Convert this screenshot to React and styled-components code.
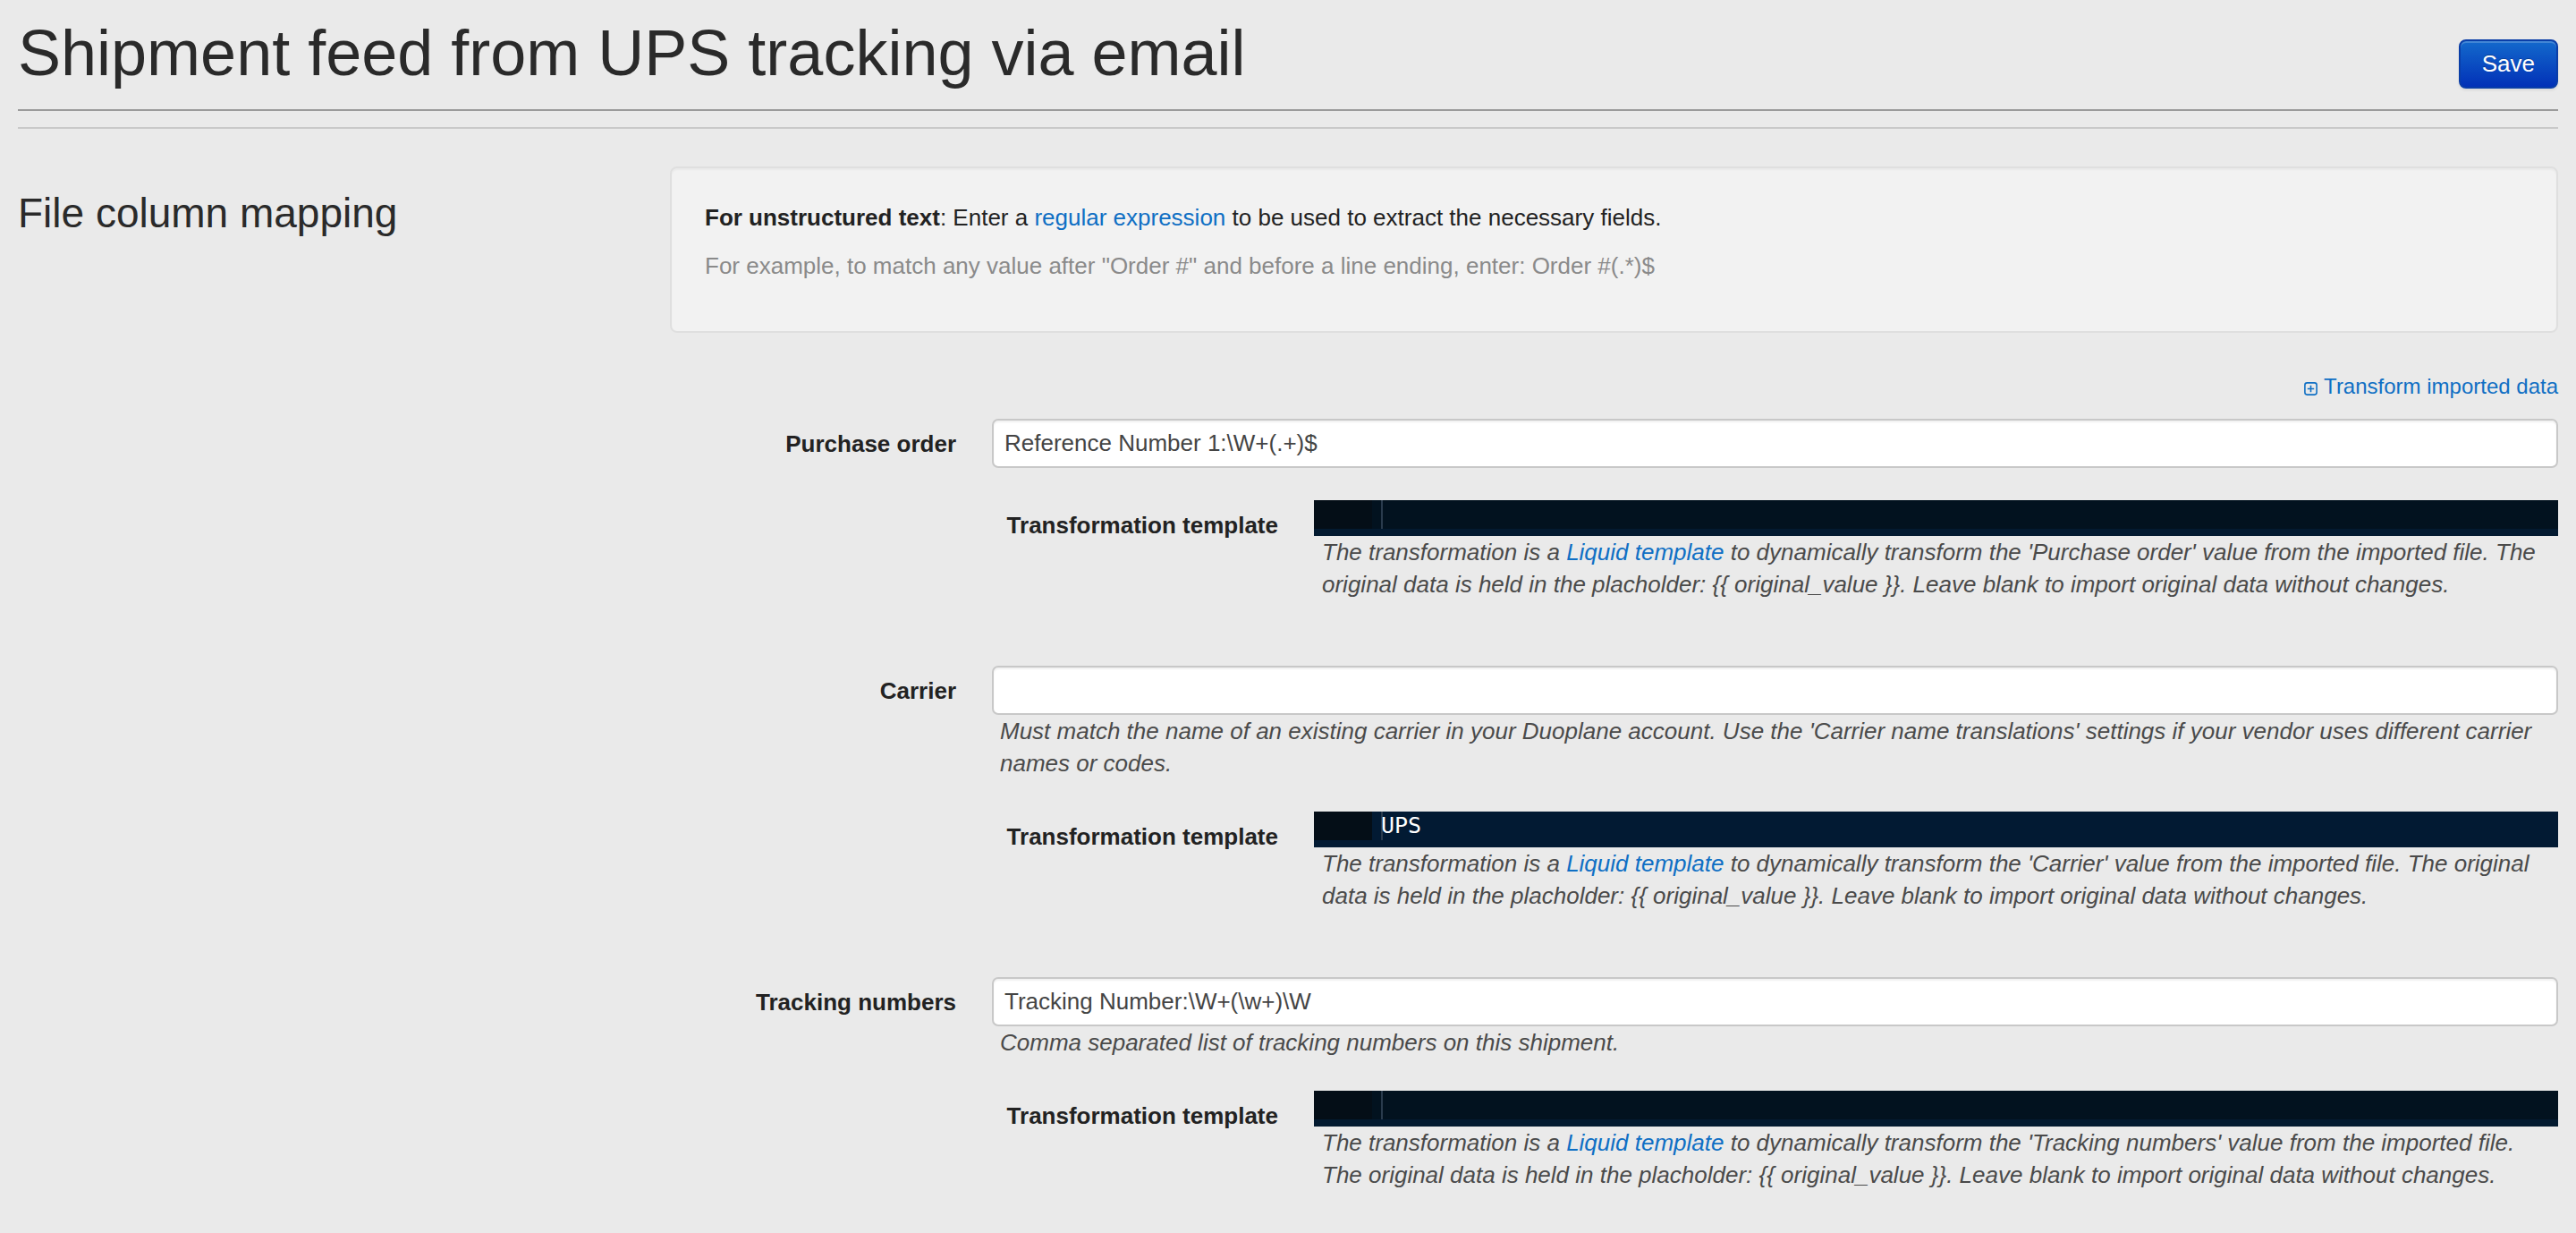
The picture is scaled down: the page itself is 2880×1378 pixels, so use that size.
import styled, { createGlobalStyle } from 'styled-components'

const GlobalStyle = createGlobalStyle`
  html, body {
    margin: 0;
    padding: 0;
    background: #eaeaea;
  }
  body {
    font-family: "Liberation Sans", Arial, Helvetica, sans-serif;
    font-size: 26px;
    line-height: 36px;
    color: #222;
  }
  * {
    box-sizing: border-box;
  }
`

const fields = [
  {
    label: 'Purchase order',
    value: 'Reference Number 1:\\W+(.+)$',
    template: '',
  },
  {
    label: 'Carrier',
    value: '',
    help: "Must match the name of an existing carrier in your Duoplane account. Use the 'Carrier name translations' settings if your vendor uses different carrier names or codes.",
    template: 'UPS',
  },
  {
    label: 'Tracking numbers',
    value: 'Tracking Number:\\W+(\\w+)\\W',
    help: 'Comma separated list of tracking numbers on this shipment.',
    template: '',
  },
]

export default function App() {
  return (
    <>
      <GlobalStyle />
      <Page>
        <Header>
          <Title>Shipment feed from UPS tracking via email</Title>
          <SaveButton>Save</SaveButton>
        </Header>
        <Divider />

        <Section>
          <SectionTitle>File column mapping</SectionTitle>
          <SectionBody>
            <Well>
              <p>
                <strong>For unstructured text</strong>: Enter a <Link>regular expression</Link> to be used to extract the necessary fields.
              </p>
              <Muted>
                For example, to match any value after "Order #" and before a line ending, enter: Order #(.*)$
              </Muted>
            </Well>

            <TransformRow>
              <TransformLink>
                <PlusIcon />
                Transform imported data
              </TransformLink>
            </TransformRow>

            {fields.map(f => (
              <ControlGroup key={f.label}>
                <ControlLabel>{f.label}</ControlLabel>
                <Controls>
                  <TextInput defaultValue={f.value} />
                  {f.help && <Help>{f.help}</Help>}
                  <NestedGroup>
                    <ControlLabel>Transformation template</ControlLabel>
                    <Controls>
                      <Editor $filled={!!f.template}>
                        <EditorLine $filled={!!f.template}>
                          <Gutter />
                          <Code>
                            <Cursor />
                            {f.template}
                          </Code>
                        </EditorLine>
                      </Editor>
                      <Help>
                        The transformation is a <Link>Liquid template</Link> to dynamically transform the '{f.label}' value from the imported file. The original data is held in the placholder: {'{{ original_value }}'}. Leave blank to import original data without changes.
                      </Help>
                    </Controls>
                  </NestedGroup>
                </Controls>
              </ControlGroup>
            ))}
          </SectionBody>
        </Section>
      </Page>
    </>
  )
}

function PlusIcon() {
  return (
    <Icon viewBox="0 0 15 15" width="15" height="15">
      <rect x="0.9" y="0.9" width="13.2" height="13.2" rx="2.5" fill="none" stroke="currentColor" strokeWidth="1.6" />
      <path d="M7.5 3.8v7.4M3.8 7.5h7.4" stroke="currentColor" strokeWidth="1.6" />
    </Icon>
  )
}

const Page = styled.div`
  padding: 0 20px;
`

const Header = styled.div`
  display: flex;
  justify-content: space-between;
  align-items: flex-start;
  padding-top: 19px;
  padding-bottom: 23px;
  border-bottom: 2px solid #9b9b9b;
`

const Title = styled.h1`
  margin: 0;
  font-size: 72px;
  line-height: 80px;
  font-weight: normal;
  color: #2a2a2a;
`

const SaveButton = styled.button`
  margin-top: 25px;
  height: 55px;
  padding: 0 24px;
  font-family: inherit;
  font-size: 26px;
  color: #fff;
  text-shadow: 0 -1px 0 rgba(0, 0, 0, 0.25);
  background: linear-gradient(#1369cc, #0231b7);
  border: 2px solid #0a3ea8;
  border-radius: 8px;
  box-shadow: inset 0 2px 0 rgba(255, 255, 255, 0.2), 0 2px 3px rgba(0, 0, 0, 0.08);
  cursor: pointer;
`

const Divider = styled.div`
  margin-top: 18px;
  height: 2px;
  background: #c9c9c9;
`

const Section = styled.div`
  display: grid;
  grid-template-columns: 729px 1fr;
  margin-top: 42px;
`

const SectionTitle = styled.h2`
  margin: 24px 0 0;
  font-size: 46px;
  line-height: 56px;
  font-weight: normal;
  color: #2a2a2a;
`

const SectionBody = styled.div``

const Well = styled.div`
  padding: 37px;
  background: #f2f2f2;
  border: 2px solid #dfdfdf;
  border-radius: 8px;
  box-shadow: inset 0 2px 2px rgba(0, 0, 0, 0.04);

  p {
    margin: 0 0 18px;
  }
`

const Muted = styled.p`
  color: #8a8a8a;
`

const Link = styled.a`
  color: #0f6fc4;
  text-decoration: none;
  cursor: pointer;
`

const TransformRow = styled.div`
  margin-top: 42px;
  margin-bottom: 18px;
  text-align: right;
  font-size: 24px;
  line-height: 36px;
`

const TransformLink = styled(Link)`
  display: inline-flex;
  align-items: baseline;
  gap: 7px;
`

const Icon = styled.svg`
  align-self: center;
  position: relative;
  top: 2px;
`

const ControlGroup = styled.div`
  display: grid;
  grid-template-columns: 320px 1fr;
  column-gap: 40px;
  margin-bottom: 73px;

  &:last-child {
    margin-bottom: 0;
  }
`

const NestedGroup = styled(ControlGroup)`
  margin: 36px 0 0;
`

const ControlLabel = styled.label`
  padding-top: 10px;
  text-align: right;
  font-weight: bold;
  color: #222;
`

const Controls = styled.div`
  min-width: 0;
`

const TextInput = styled.input`
  display: block;
  width: 100%;
  height: 55px;
  padding: 0 12px;
  font-family: inherit;
  font-size: 26px;
  color: #444;
  background: #fff;
  border: 2px solid #c8c8c8;
  border-radius: 7px;
  box-shadow: inset 0 2px 2px rgba(0, 0, 0, 0.06);
  outline: none;
`

const Help = styled.div`
  padding-left: 9px;
  font-style: italic;
  color: #4a4a4a;
  line-height: 36px;
`

const Editor = styled.div`
  height: 40px;
  background: ${p => (p.$filled ? '#021a33' : '#031a30')};
`

const EditorLine = styled.div`
  display: flex;
  height: 32px;
  background: ${p => (p.$filled ? '#021a33' : '#02121f')};
`

const Gutter = styled.div`
  width: 65px;
  background: #040e17;
`

const Code = styled.div`
  flex: 1;
  padding-left: 10px;
  font-family: "DejaVu Sans Mono", "Liberation Mono", monospace;
  font-size: 25px;
  line-height: 32px;
  color: #fff;
  white-space: pre;
`

const Cursor = styled.span`
  display: inline-block;
  width: 2px;
  height: 32px;
  margin-right: -2px;
  vertical-align: top;
  background: #2a3b4d;
`
